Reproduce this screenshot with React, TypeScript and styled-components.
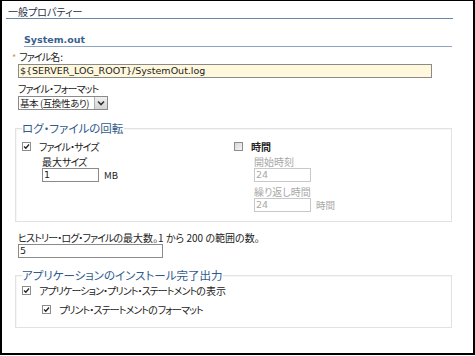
import { Fragment } from "react";
import styled, { createGlobalStyle } from "styled-components";

const GlobalStyle = createGlobalStyle`
  html, body {
    margin: 0;
    padding: 0;
    background: #ffffff;
  }
  body {
    font-family: "Noto Sans CJK JP", "Noto Sans", sans-serif;
    font-feature-settings: "palt";
    color: #222;
  }
`;

const Frame = styled.div`
  width: 475px;
  height: 355px;
  box-sizing: border-box;
  border: 2px solid #000;
  border-top-width: 1px;
  padding: 4px 0 0 4px;
`;

const PageTitle = styled.div`
  width: 447px;
  font-size: 10px;
  line-height: 13px;
  color: #1e2d44;
  padding-left: 2px;
  box-sizing: border-box;
  border-bottom: 1px solid #6b86a8;
`;

const SectionTitle = styled.div`
  width: 428px;
  margin: 14px 0 0 18px;
  font-family: "DejaVu Sans", sans-serif;
  font-size: 9.5px;
  font-weight: bold;
  line-height: 13px;
  color: #3a5f8f;
  border-bottom: 1px solid #8fa4c0;
`;

const Body = styled.div`
  padding-left: 12px;
`;

const Kana = styled.span`
  letter-spacing: -0.9px;
`;

const Label = styled.div<{ $top?: number; $disabled?: boolean }>`
  margin-top: ${(p) => p.$top ?? 0}px;
  font-size: 10px;
  line-height: 12px;
  white-space: nowrap;
  color: ${(p) => (p.$disabled ? "#a8a8a8" : "#222")};
`;

const Star = styled.span`
  color: #c8a040;
  margin-left: -6px;
  margin-right: 3px;
  font-size: 9px;
`;

const TextInput = styled.div<{ $width: number; $yellow?: boolean; $disabled?: boolean }>`
  width: ${(p) => p.$width}px;
  height: 14px;
  box-sizing: border-box;
  border: 1px solid ${(p) => (p.$disabled ? "#c8c8c8" : "#8a8a8a")};
  background: ${(p) => (p.$yellow ? "#fff8dc" : "#fff")};
  font-family: "DejaVu Sans", sans-serif;
  font-size: 9.5px;
  line-height: 12px;
  padding-left: 1px;
  color: ${(p) => (p.$disabled ? "#a8a8a8" : "#222")};
`;

const InputRow = styled.div`
  display: flex;
  align-items: center;
  gap: 5px;
`;

const Unit = styled.span<{ $disabled?: boolean }>`
  font-size: 9.5px;
  color: ${(p) => (p.$disabled ? "#a8a8a8" : "#222")};
`;

const Select = styled.div`
  display: flex;
  width: 90px;
  height: 14px;
  margin-top: 1px;
  box-sizing: border-box;
  border: 1px solid #8a8a8a;
  font-size: 9.5px;
  letter-spacing: -0.4px;
  line-height: 12px;
`;

const SelectText = styled.span`
  flex: 1;
  min-width: 0;
  padding-left: 1px;
  white-space: nowrap;
`;

const SelectButton = styled.span`
  flex: none;
  width: 12px;
  background: linear-gradient(#f0f0f0, #d4d4d4);
  border-left: 1px solid #b0b0b0;
  display: flex;
  align-items: center;
  justify-content: center;
`;

const Fieldset = styled.fieldset<{ $top: number; $height: number }>`
  width: 437px;
  margin: ${(p) => p.$top}px 0 0 -3px;
  padding: 0 0 0 6px;
  height: ${(p) => p.$height}px;
  box-sizing: border-box;
  border: 1px solid #e2e2e2;
  box-shadow: inset 1px 1px 0 #f6f6f6;
  min-width: 0;
`;

const Legend = styled.legend`
  padding: 0 1px 0 0;
  margin-left: 0;
  font-size: 11.5px;
  line-height: 14px;
  color: #2f5b8c;
  font-weight: normal;
`;

const Columns = styled.div`
  display: grid;
  grid-template-columns: 212px 1fr;
`;

const Column = styled.div``;

const CheckRow = styled.label<{ $indent?: number; $top?: number }>`
  display: flex;
  align-items: center;
  gap: 8px;
  margin-left: ${(p) => p.$indent ?? 0}px;
  margin-top: ${(p) => p.$top ?? 0}px;
  font-size: 10px;
  line-height: 13px;
  white-space: nowrap;
`;

const Box = styled.span<{ $checked?: boolean }>`
  width: 9px;
  height: 9px;
  box-sizing: border-box;
  border: 1px solid #8c8c8c;
  background: ${(p) => (p.$checked ? "#fff" : "linear-gradient(135deg, #d8d8d8, #f4f4f4)")};
  display: flex;
  align-items: center;
  justify-content: center;
`;

const BoldText = styled.span`
  font-weight: bold;
`;

const Indent = styled.div`
  padding-left: 20px;
`;

// narrow the katakana runs, as the proportional UI font of the original does
function jp(text: string) {
  return text.split(/([\u30A0-\u30FF]+)/).map((part, i) =>
    i % 2 === 1 ? <Kana key={i}>{part}</Kana> : <Fragment key={i}>{part}</Fragment>
  );
}

function Check({ checked }: { checked: boolean }) {
  return (
    <Box $checked={checked}>
      {checked && (
        <svg width="7" height="7" viewBox="0 0 7 7">
          <path d="M1 3.5 L2.8 5.2 L6 1.5" fill="none" stroke="#222" strokeWidth="1.3" />
        </svg>
      )}
    </Box>
  );
}

export default function App() {
  return (
    <>
      <GlobalStyle />
      <Frame>
        <PageTitle>一般プロパティー</PageTitle>
        <SectionTitle>System.out</SectionTitle>
        <Body>
          <Label $top={4}>
            <Star>*</Star>
            {jp("ファイル名:")}
          </Label>
          <TextInput $width={414} $yellow>
            {"${SERVER_LOG_ROOT}/SystemOut.log"}
          </TextInput>
          <Label $top={5}>{jp("ファイル・フォーマット")}</Label>
          <Select>
            <SelectText>基本 (互換性あり)</SelectText>
            <SelectButton>
              <svg width="8" height="6" viewBox="0 0 8 6">
                <path d="M1 1.5 L4 4.5 L7 1.5" fill="none" stroke="#333" strokeWidth="1.6" />
              </svg>
            </SelectButton>
          </Select>

          <Fieldset $top={11} $height={101}>
            <Legend>ログ・ファイルの回転</Legend>
            <Columns>
              <Column>
                <CheckRow $top={5}>
                  <Check checked />
                  <span>{jp("ファイル・サイズ")}</span>
                </CheckRow>
                <Indent>
                  <Label $top={3}>{jp("最大サイズ")}</Label>
                  <InputRow>
                    <TextInput $width={57}>1</TextInput>
                    <Unit>MB</Unit>
                  </InputRow>
                </Indent>
              </Column>
              <Column>
                <CheckRow $top={5}>
                  <Check checked={false} />
                  <BoldText>時間</BoldText>
                </CheckRow>
                <Indent>
                  <Label $top={3} $disabled>
                    開始時刻
                  </Label>
                  <TextInput $width={57} $disabled>
                    24
                  </TextInput>
                  <Label $top={4} $disabled>
                    繰り返し時間
                  </Label>
                  <InputRow>
                    <TextInput $width={57} $disabled>
                      24
                    </TextInput>
                    <Unit $disabled>時間</Unit>
                  </InputRow>
                </Indent>
              </Column>
            </Columns>
          </Fieldset>

          <Label $top={10}>{jp("ヒストリー・ログ・ファイルの最大数。1 から 200 の範囲の数。")}</Label>
          <TextInput $width={145}>5</TextInput>

          <Fieldset $top={10} $height={60}>
            <Legend>アプリケーションのインストール完了出力</Legend>
            <CheckRow $top={2}>
              <Check checked />
              <span>{jp("アプリケーション・プリント・ステートメントの表示")}</span>
            </CheckRow>
            <CheckRow $top={6} $indent={20}>
              <Check checked />
              <span>{jp("プリント・ステートメントのフォーマット")}</span>
            </CheckRow>
          </Fieldset>
        </Body>
      </Frame>
    </>
  );
}
